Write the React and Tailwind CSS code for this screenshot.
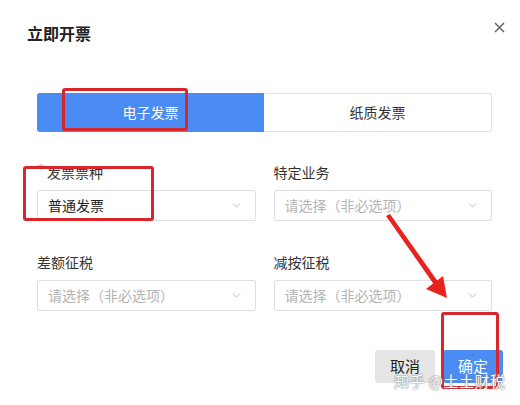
import { ChevronDown } from "lucide-react";

function Select({ value, placeholder }) {
  return (
    <div className="h-[31px] flex items-center justify-between pl-[10px] pr-[12px] border border-[#dcdfe6] rounded-[2px] bg-white">
      {value ? (
        <span className="text-[14px] text-[#222]">{value}</span>
      ) : (
        <span className="text-[14px] text-[#b4b4b4]">{placeholder}</span>
      )}
      <ChevronDown size={13} strokeWidth={1.5} className="text-[#b0b0b0]" />
    </div>
  );
}

function Field({ label, required, value }) {
  return (
    <div className="flex flex-col">
      <div className="h-[20px] flex items-center text-[14px] text-[#333] mb-[8px]">
        {required && (
          <span className="font-['DejaVu_Sans',sans-serif] text-[#ee4b4b] text-[12px] leading-[12px] w-[9px] ml-[1px] self-start mt-[1px]">
            *
          </span>
        )}
        {label}
      </div>
      <Select value={value} placeholder="请选择（非必选项）" />
    </div>
  );
}

export default function App() {
  return (
    <div className="w-[520px] h-[405px] bg-white relative overflow-hidden font-['Noto_Sans_CJK_SC',sans-serif]">
      {/* Header */}
      <div className="flex justify-between items-start pl-[27px] pr-[15px] pt-[22px]">
        <h2 className="text-[16px] leading-[22px] font-bold text-[#222]">立即开票</h2>
        <svg width="11" height="11" viewBox="0 0 11 11">
          <path d="M1 1L10 10M10 1L1 10" stroke="#666" strokeWidth="1.5" />
        </svg>
      </div>

      {/* Tabs */}
      <div className="mt-[49px] ml-[37px] mr-[28px] h-[39px] flex text-[14px]">
        <div className="flex-1 flex items-center justify-center bg-[#4a8cf3] text-white rounded-l-[3px]">
          电子发票
        </div>
        <div className="flex-1 flex items-center justify-center border border-l-0 border-[#e2e2e2] text-[#333] rounded-r-[3px]">
          纸质发票
        </div>
      </div>

      {/* Form */}
      <div className="mt-[30px] ml-[37px] mr-[28px] grid grid-cols-2 gap-x-[18px] gap-y-[31px]">
        <Field label="发票票种" required value="普通发票" />
        <Field label="特定业务" />
        <Field label="差额征税" />
        <Field label="减按征税" />
      </div>

      {/* Footer */}
      <div className="mt-[39px] flex justify-end gap-[8px] pr-[17px]">
        <button className="w-[60px] h-[33px] rounded-[3px] bg-[#e6e6e6] text-[15px] text-[#222]">取消</button>
        <button className="w-[60px] h-[33px] rounded-[3px] bg-[#4a8cf3] text-[15px] text-white">确定</button>
      </div>

      {/* Annotations */}
      <div className="absolute left-[62px] top-[88px] w-[126px] h-[43px] border-[3px] border-[#d8262c] rounded-[3px]" />
      <div className="absolute left-[23px] top-[166px] w-[131px] h-[55px] border-[3px] border-[#d8262c] rounded-[3px]" />
      <div className="absolute left-[441px] top-[312px] w-[58px] h-[77px] border-[3px] border-[#d8262c] rounded-[3px]" />
      <svg className="absolute left-0 top-0" width="520" height="405">
        <polygon points="386,216 390,214 439,283 435,286" fill="#e8231f" />
        <polygon points="426,289 443,276 447,298" fill="#e8231f" />
      </svg>

      {/* Watermark */}
      <div className="absolute left-[394px] top-[371px] text-[15px] leading-[20px] text-white [text-shadow:0_0_2px_#888,0_0_1px_#666] tracking-[0.5px]">
        知乎 @土土财税
      </div>
    </div>
  );
}
